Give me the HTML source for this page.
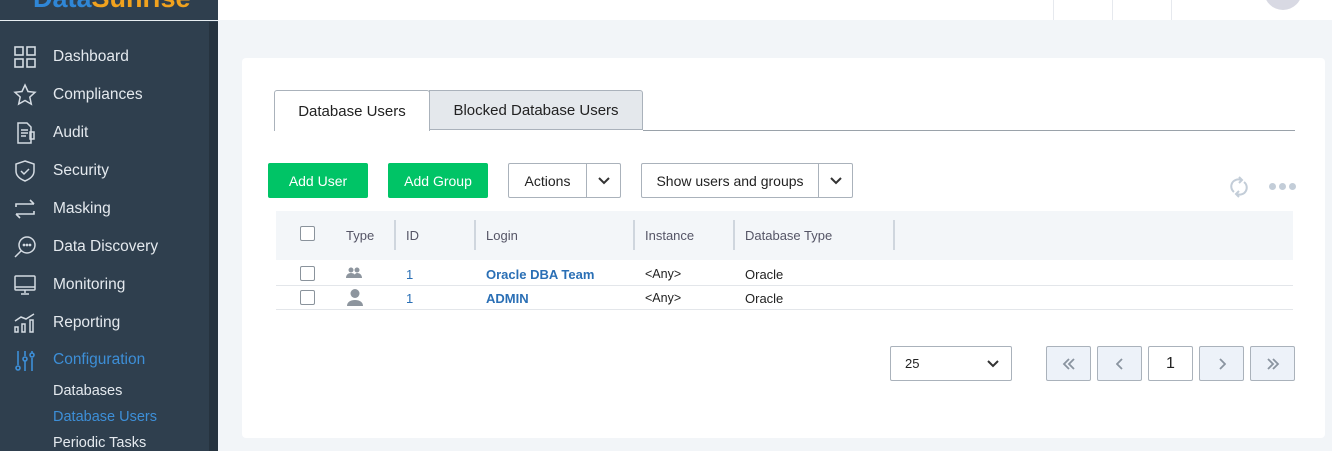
<!DOCTYPE html><html><head><style>
*{box-sizing:border-box;margin:0;padding:0}
body{width:1332px;height:451px;overflow:hidden;background:#f2f5f8;font-family:"Liberation Sans",sans-serif;position:relative;font-size:14px;color:#222}
.sb{position:absolute;left:0;top:0;width:218px;height:451px;background:#2f3f4e}
.sb .strip{position:absolute;left:209px;top:22px;width:9px;bottom:0;background:#26333f}
.logo{position:absolute;left:33px;top:-17px;font-size:27px;font-weight:bold;white-space:nowrap}
.line{position:absolute;left:0;top:20px;width:218px;height:1px;background:#e8eef2}
.nav{position:absolute;left:53px;color:#e4e9ee;font-size:15.5px;margin-top:2px}
.ic{position:absolute;left:13px;width:24px;height:24px;margin-top:2px}
.hdr{position:absolute;left:218px;top:0;right:0;height:20px;background:#fff}
.card{position:absolute;left:242px;top:58px;width:1083px;height:380px;background:#fff;border-radius:4px}
.abs{position:absolute}
.btn{position:absolute;height:35px;top:163px;border-radius:2px;font-size:14px;display:flex;align-items:center;justify-content:center}
.g{background:#00c466;color:#fff}
.o{border:1px solid #aab2bb;background:#fff;color:#222}
.th{position:absolute;top:211px;left:276px;width:1017px;height:49px;background:#f3f6f9}
.col{position:absolute;font-size:13px;color:#556}
.sep{position:absolute;top:220px;width:2px;height:30px;background:#cfd6de}
.cb{position:absolute;width:15px;height:15px;border:1px solid #8a939c;border-radius:2px;background:#fff}
.pg{position:absolute;top:346px;width:45px;height:35px;border:1px solid #aab2bb;border-radius:2px;background:#edf2f9;display:flex;align-items:center;justify-content:center}
</style></head><body>
<div class="sb"><div class="strip"></div>
<div class="logo"><span style="color:#2f86d6">Data</span><span style="color:#f1a21e">Sunrise</span></div>
<div class="line"></div>
<svg class="ic" style="top:43px" viewBox="0 0 24 24" fill="none" stroke="#d4dbe2" stroke-width="1.6"><rect x="2" y="2" width="8" height="8"/><rect x="14" y="2" width="8" height="8"/><rect x="2" y="14" width="8" height="8"/><rect x="14" y="14" width="8" height="8"/></svg>
<div class="nav" style="top:46px">Dashboard</div>
<svg class="ic" style="top:81px" viewBox="0 0 24 24" fill="none" stroke="#d4dbe2" stroke-width="1.5"><path d="M12 2l3 6.5 7 .8-5.2 4.8 1.5 7L12 17.5 5.7 21l1.5-7L2 9.3l7-.8z"/></svg>
<div class="nav" style="top:84px">Compliances</div>
<svg class="ic" style="top:119px" viewBox="0 0 24 24" fill="none" stroke="#d4dbe2" stroke-width="1.5"><path d="M5 2h9l4 4v16H5z M8 9h7M8 12h7M8 15h5"/><rect x="17" y="11" width="4" height="7"/></svg>
<div class="nav" style="top:122px">Audit</div>
<svg class="ic" style="top:157px" viewBox="0 0 24 24" fill="none" stroke="#d4dbe2" stroke-width="1.5"><path d="M12 2l9 3v7c0 5-4 8-9 10C7 20 3 17 3 12V5z M8 12l3 3 5-5"/></svg>
<div class="nav" style="top:160px">Security</div>
<svg class="ic" style="top:195px" viewBox="0 0 24 24" fill="none" stroke="#d4dbe2" stroke-width="1.6"><path d="M3 10V7h18M17 3l4 4M21 14v3H3M7 21l-4-4"/></svg>
<div class="nav" style="top:198px">Masking</div>
<svg class="ic" style="top:233px" viewBox="0 0 24 24" fill="none" stroke="#d4dbe2" stroke-width="1.5"><circle cx="14" cy="10" r="8"/><path d="M8 16l-6 6"/><circle cx="11" cy="10" r=".6"/><circle cx="14" cy="10" r=".6"/><circle cx="17" cy="10" r=".6"/></svg>
<div class="nav" style="top:236px">Data Discovery</div>
<svg class="ic" style="top:271px" viewBox="0 0 24 24" fill="none" stroke="#d4dbe2" stroke-width="1.5"><rect x="2" y="3" width="20" height="14" rx="1"/><path d="M2 14h20M12 17v3M8 21h8"/></svg>
<div class="nav" style="top:274px">Monitoring</div>
<svg class="ic" style="top:309px" viewBox="0 0 24 24" fill="none" stroke="#d4dbe2" stroke-width="1.5"><path d="M2 10l6-4 5 2 8-5"/><rect x="2" y="16" width="3" height="5"/><rect x="9" y="13" width="3" height="8"/><rect x="17" y="9" width="3" height="12"/></svg>
<div class="nav" style="top:312px">Reporting</div>
<svg class="ic" style="top:347px" viewBox="0 0 24 24" fill="none" stroke="#3d8fd8" stroke-width="1.6"><path d="M5 2v14M12 2v5M19 2v2M12 12v10M19 9v13"/><circle cx="5" cy="19" r="2"/><circle cx="12" cy="10" r="2"/><circle cx="19" cy="6" r="2"/></svg>
<div class="nav" style="top:349px;color:#3d8fd8">Configuration</div>
<div class="nav" style="top:381px;font-size:14.5px">Databases</div>
<div class="nav" style="top:407px;font-size:14.5px;color:#3d8fd8">Database Users</div>
<div class="nav" style="top:433px;font-size:14.5px">Periodic Tasks</div>
</div>
<div class="hdr">
<div class="abs" style="left:835px;top:0;width:1px;height:20px;background:#e6e9ee"></div>
<div class="abs" style="left:894px;top:0;width:1px;height:20px;background:#e6e9ee"></div>
<div class="abs" style="left:953px;top:0;width:1px;height:20px;background:#e6e9ee"></div>
<div class="abs" style="left:1046px;top:-28px;width:38px;height:38px;border-radius:50%;background:#d8d9e3"></div>
</div>
<div class="card"></div>
<div class="abs" style="left:274px;top:90px;width:156px;height:41px;border:1px solid #aab2bb;border-bottom:none;background:#fff;border-radius:3px 3px 0 0;display:flex;align-items:center;justify-content:center;font-size:15px;padding-top:1px">Database Users</div>
<div class="abs" style="left:429px;top:90px;width:214px;height:40px;border:1px solid #aab2bb;background:#e4e8ec;border-radius:0 3px 0 0;display:flex;align-items:center;justify-content:center;font-size:15px;padding-top:1px">Blocked Database Users</div>
<div class="abs" style="left:643px;top:130px;width:652px;height:1px;background:#9aa2aa"></div>
<div class="btn g" style="left:268px;width:100px">Add User</div>
<div class="btn g" style="left:388px;width:100px">Add Group</div>
<div class="btn o" style="left:508px;width:113px;justify-content:flex-start"><span style="width:77px;text-align:center">Actions</span><span style="width:1px;height:33px;background:#aab2bb"></span><span style="flex:1;display:flex;justify-content:center"><svg width="12" height="8" viewBox="0 0 12 8" fill="none" stroke="#333" stroke-width="2"><path d="M1 1l5 5 5-5"/></svg></span></div>
<div class="btn o" style="left:641px;width:212px;justify-content:flex-start"><span style="width:176px;text-align:center">Show users and groups</span><span style="width:1px;height:33px;background:#aab2bb"></span><span style="flex:1;display:flex;justify-content:center"><svg width="12" height="8" viewBox="0 0 12 8" fill="none" stroke="#333" stroke-width="2"><path d="M1 1l5 5 5-5"/></svg></span></div>
<svg class="abs" style="left:1229px;top:176px" width="20" height="22" viewBox="0 0 20 22" fill="none" stroke="#c3cdd8" stroke-width="2"><path d="M5 16A7 7 0 0 1 12 4M15 6A7 7 0 0 1 8 18"/><path d="M10 1l3 3-3 3M10 21l-3-3 3-3"/></svg>
<div class="abs" style="left:1269px;top:183px;width:7px;height:7px;border-radius:50%;background:#c3cdd8"></div>
<div class="abs" style="left:1279px;top:183px;width:7px;height:7px;border-radius:50%;background:#c3cdd8"></div>
<div class="abs" style="left:1289px;top:183px;width:7px;height:7px;border-radius:50%;background:#c3cdd8"></div>
<div class="th"></div>
<div class="cb" style="left:300px;top:226px"></div>
<div class="col" style="left:346px;top:228px">Type</div>
<div class="sep" style="left:394px"></div><div class="col" style="left:406px;top:228px">ID</div>
<div class="sep" style="left:474px"></div><div class="col" style="left:486px;top:228px">Login</div>
<div class="sep" style="left:633px"></div><div class="col" style="left:645px;top:228px">Instance</div>
<div class="sep" style="left:733px"></div><div class="col" style="left:745px;top:228px">Database Type</div>
<div class="sep" style="left:893px"></div>
<div class="cb" style="left:300px;top:266px"></div>
<svg class="abs" style="left:346px;top:267px" width="16" height="12" viewBox="0 0 16 12" fill="#8d959e"><circle cx="5" cy="3" r="2.5"/><circle cx="11" cy="3" r="2.5"/><path d="M0 11c0-3 2-5 5-5s5 2 5 5zM8 11c0-3 1.5-5 3-5 3 0 5 2 5 5z"/></svg>
<div class="col" style="left:406px;top:267px;color:#2a6fb5">1</div>
<div class="col" style="left:486px;top:267px;color:#2a6fb5;font-weight:bold">Oracle DBA Team</div>
<div class="col" style="left:645px;top:267px;color:#222;font-size:12.5px">&lt;Any&gt;</div>
<div class="col" style="left:745px;top:267px;color:#222">Oracle</div>
<div class="abs" style="left:276px;top:285px;width:1017px;height:1px;background:#e3e6ea"></div>
<div class="cb" style="left:300px;top:290px"></div>
<svg class="abs" style="left:346px;top:289px" width="18" height="17" viewBox="0 0 18 17" fill="#8d959e"><circle cx="9" cy="4.5" r="4.5"/><path d="M1 17c0-4 3.5-6 8-6s8 2 8 6z"/></svg>
<div class="col" style="left:406px;top:291px;color:#2a6fb5">1</div>
<div class="col" style="left:486px;top:291px;color:#2a6fb5;font-weight:bold">ADMIN</div>
<div class="col" style="left:645px;top:291px;color:#222;font-size:12.5px">&lt;Any&gt;</div>
<div class="col" style="left:745px;top:291px;color:#222">Oracle</div>
<div class="abs" style="left:276px;top:309px;width:1017px;height:1px;background:#e3e6ea"></div>
<div class="abs" style="left:890px;top:346px;width:122px;height:35px;border:1px solid #aab2bb;border-radius:2px;background:#fff;font-size:13px;padding:9px 14px">25<svg class="abs" style="left:96px;top:13px" width="12" height="8" viewBox="0 0 12 8" fill="none" stroke="#333" stroke-width="2"><path d="M1 1l5 5 5-5"/></svg></div>
<div class="pg" style="left:1046px"><svg width="14" height="12" viewBox="0 0 14 12" fill="none" stroke="#8a94a0" stroke-width="1.8"><path d="M7 1L2 6l5 5M12 1L7 6l5 5"/></svg></div>
<div class="pg" style="left:1097px"><svg width="8" height="12" viewBox="0 0 8 12" fill="none" stroke="#8a94a0" stroke-width="1.8"><path d="M6 1L1 6l5 5"/></svg></div>
<div class="pg" style="left:1148px;background:#fff;color:#222;font-size:16px">1</div>
<div class="pg" style="left:1199px"><svg width="8" height="12" viewBox="0 0 8 12" fill="none" stroke="#8a94a0" stroke-width="1.8"><path d="M2 1l5 5-5 5"/></svg></div>
<div class="pg" style="left:1250px"><svg width="14" height="12" viewBox="0 0 14 12" fill="none" stroke="#8a94a0" stroke-width="1.8"><path d="M2 1l5 5-5 5M7 1l5 5-5 5"/></svg></div>
</body></html>
